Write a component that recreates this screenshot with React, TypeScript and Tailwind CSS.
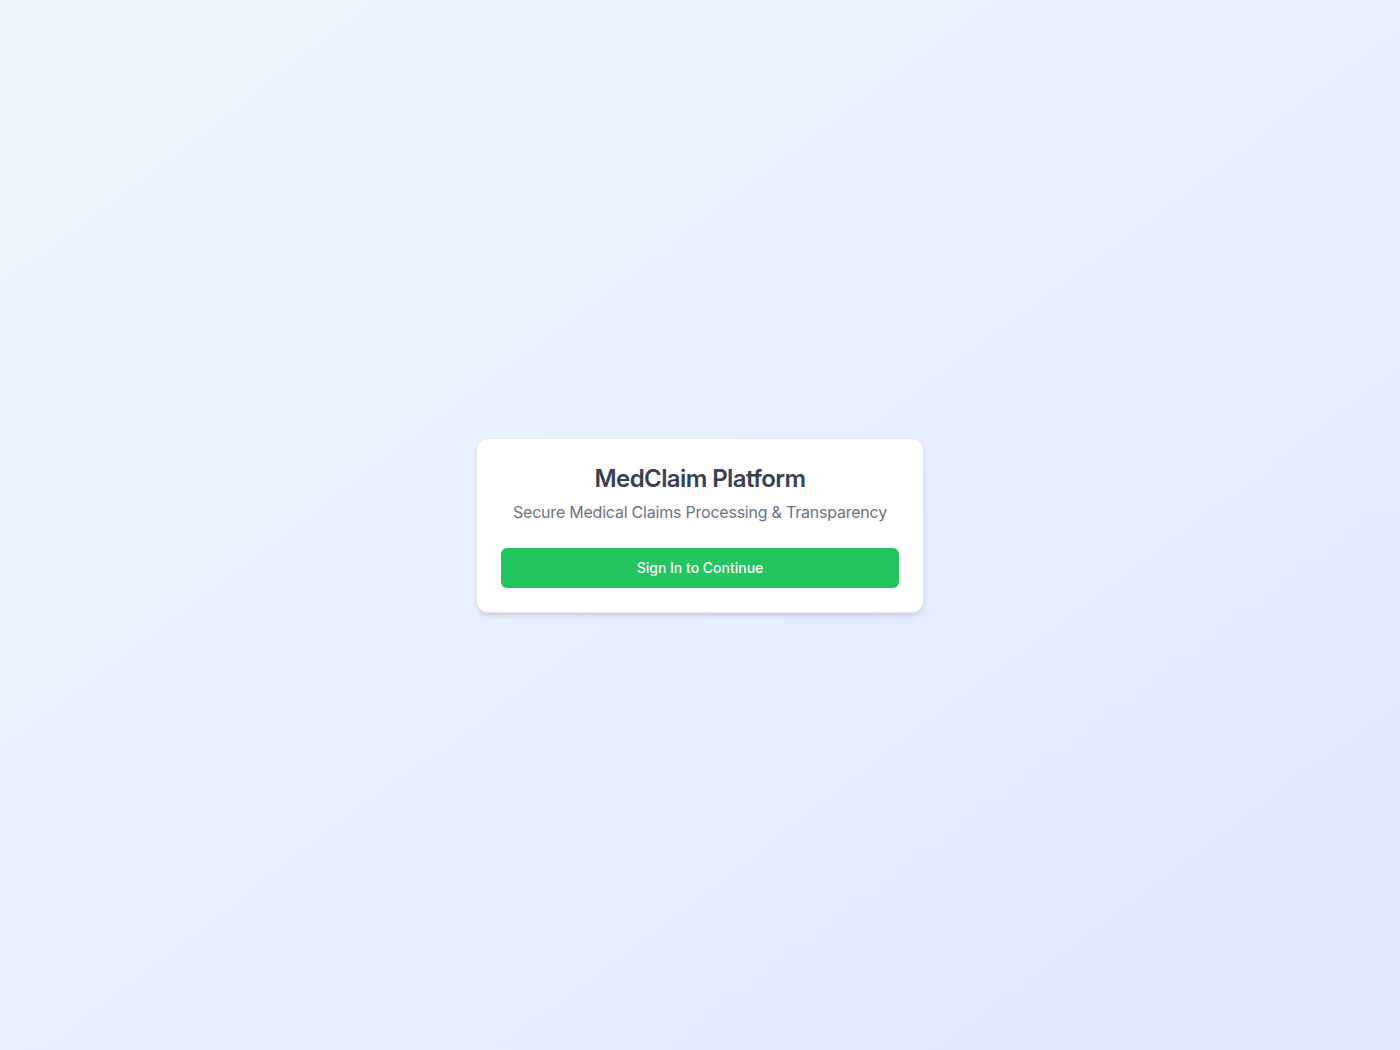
export default function App() {
  return (
    <div
      className="flex min-h-screen items-center justify-center bg-gradient-to-br from-[#eff6ff] to-[#e0e7ff]"
      style={{ fontFamily: 'Inter, "Noto Sans", sans-serif' }}
    >
      <div className="w-[448px] rounded-xl border border-[#e5e7eb] bg-white p-6 text-center shadow-md">
        <h1 className="text-2xl font-semibold tracking-tight text-[#374151]">MedClaim Platform</h1>
        <p className="mt-[5px] text-base tracking-[-0.22px] text-[#6b7280]">
          Secure Medical Claims Processing &amp; Transparency
        </p>
        <button className="mt-6 h-10 w-full rounded-md bg-[#22c55e] text-sm font-medium text-white">
          Sign In to Continue
        </button>
      </div>
    </div>
  );
}
